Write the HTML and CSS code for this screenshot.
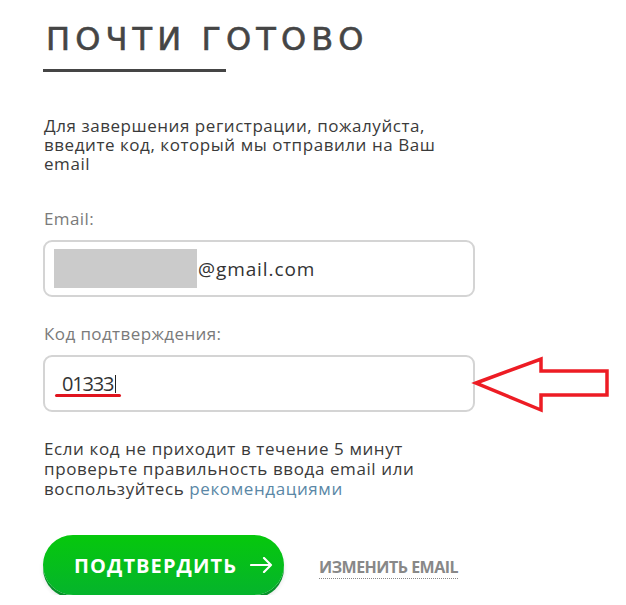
FILE: index.html
```html
<!DOCTYPE html>
<html lang="ru">
<head>
<meta charset="utf-8">
<link rel="stylesheet" href="styles.css">
</head>
<body>
<div class="page">
  <h1 class="title">ПОЧТИ ГОТОВО</h1>
  <div class="title-line"></div>
  <p class="intro">Для завершения регистрации, пожалуйста, введите код, который мы отправили на Ваш email</p>

  <div class="field">
    <div class="label">Email:</div>
    <div class="input"><span class="redact"></span><span class="value">@gmail.com</span></div>
  </div>

  <div class="field code-field">
    <div class="label">Код подтверждения:</div>
    <div class="input"><span class="code">01333</span><span class="caret"></span></div>
    <span class="code-mark"></span>
    <svg class="arrow" width="150" height="70" viewBox="0 0 150 70">
      <polygon points="6,35 71,11 71,23 137,23 137,47 71,47 71,62" fill="none" stroke="#ed1c24" stroke-width="3.5" stroke-linejoin="miter"/>
    </svg>
  </div>

  <p class="note"><span>Если код не приходит в течение 5 минут проверьте правильность ввода email или воспользуйтесь&#32;</span><a class="link">рекомендациями</a></p>

  <div class="actions">
    <button class="btn"><span>ПОДТВЕРДИТЬ</span><svg class="btn-arrow" width="23" height="16" viewBox="0 0 23 16"><path d="M1 8 H21 M14 1 L21 8 L14 15" fill="none" stroke="#fff" stroke-width="2.2" stroke-linecap="round" stroke-linejoin="round"/></svg></button>
    <a class="change">ИЗМЕНИТЬ EMAIL</a>
  </div>
</div>
</body>
</html>
```
FILE: styles.css
```css
html, body {
  margin: 0;
  padding: 0;
  background: #fff;
}
.page {
  padding: 0 0 0 43px;
  font-family: "Open Sans", "Noto Sans", sans-serif;
  color: #3a3a3a;
}
.title {
  margin: 0;
  padding-top: 20px;
  padding-left: 3px;
  font-family: "DejaVu Sans", sans-serif;
  font-weight: normal;
  font-size: 32px;
  line-height: 38px;
  letter-spacing: 5.1px;
  color: #454545;
  -webkit-text-stroke: 0.6px #454545;
}
.title-line {
  width: 183px;
  height: 3px;
  background: #454545;
  margin-top: 11px;
}
.intro {
  margin: 44px 0 0 1px;
  width: 420px;
  font-size: 17px;
  line-height: 19px;
  letter-spacing: 0.55px;
}
.field {
  position: relative;
}
.label {
  margin: 36px 0 0 1px;
  font-size: 17px;
  line-height: 20px;
  letter-spacing: 0.4px;
  color: #7a7a7a;
}
.input {
  box-sizing: border-box;
  width: 432px;
  height: 57px;
  margin-top: 11px;
  border: 2px solid #d4d4d4;
  border-radius: 9px;
  display: flex;
  align-items: center;
  padding-left: 9px;
  font-size: 19px;
  color: #333;
}
.redact {
  width: 143px;
  height: 39px;
  background: #cbcbcb;
}
.value {
  padding-left: 1px;
  letter-spacing: 0.9px;
}
.code-field .label {
  margin-top: 27px;
}
.code {
  padding-left: 8px;
  font-size: 20px;
  letter-spacing: -1.2px;
}
.caret {
  width: 1px;
  height: 18px;
  background: #222;
  margin-left: 2px;
}
.code-mark {
  position: absolute;
  left: 12px;
  top: 70px;
  width: 66px;
  height: 3px;
  border-radius: 2px;
  background: #e0141e;
}
.arrow {
  position: absolute;
  left: 427px;
  top: 24px;
}
.note {
  margin: 27px 0 0 1px;
  width: 420px;
  font-size: 17px;
  line-height: 20px;
  letter-spacing: 0.6px;
}
.link {
  color: #5a87a6;
}
.actions {
  display: flex;
  align-items: flex-start;
  margin-top: 36px;
  gap: 35px;
}
.btn {
  box-sizing: border-box;
  width: 241px;
  height: 60px;
  border: 0;
  border-radius: 30px;
  background: linear-gradient(#06c80c, #05b42c);
  box-shadow: 0 3px 0 #07912a, 0 4px 4px rgba(0,0,0,0.12);
  color: #fff;
  font-family: "Open Sans", sans-serif;
  font-weight: 700;
  font-size: 20px;
  letter-spacing: 1.1px;
  padding: 0 0 0 31px;
  display: flex;
  align-items: center;
  justify-content: flex-start;
  gap: 13px;
}
.btn-arrow {
  display: block;
}
.change {
  margin-top: 22px;
  font-family: "Open Sans", sans-serif;
  font-weight: 700;
  font-size: 16px;
  line-height: 20px;
  letter-spacing: -0.5px;
  color: #888;
  border-bottom: 1px dotted #888;
  padding-bottom: 1px;
}
```
